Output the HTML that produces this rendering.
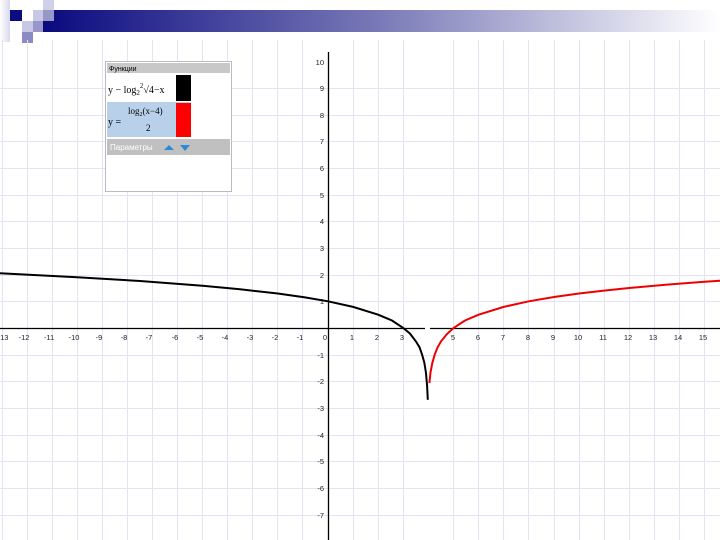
<!DOCTYPE html><html><head><meta charset="utf-8"><style>body{margin:0;width:720px;height:540px;overflow:hidden;background:#fff;font-family:"Liberation Sans","Noto Sans CJK SC",sans-serif}</style></head><body>
<svg width="720" height="540" viewBox="0 0 720 540" xmlns="http://www.w3.org/2000/svg" style="position:absolute;left:0;top:0">
<defs><linearGradient id="g" x1="0" x2="1"><stop offset="0" stop-color="#0a0a80"/><stop offset="0.5" stop-color="#7a7ab8"/><stop offset="1" stop-color="#ffffff"/></linearGradient>
<linearGradient id="g2" x1="0" x2="1"><stop offset="0" stop-color="#fff"/><stop offset="1" stop-color="#d8d8ec"/></linearGradient></defs>
<rect x="0" y="0" width="10" height="42" fill="url(#g2)"/>
<rect x="43" y="10" width="677" height="22" fill="url(#g)"/>
<rect x="10" y="10" width="12" height="11" fill="#0c0c80"/>
<rect x="43" y="0" width="11" height="10" fill="#d0d0e8"/>
<rect x="33" y="10" width="10" height="11" fill="#c8c8e4"/>
<rect x="43" y="10" width="11" height="11" fill="#9898c8"/>
<rect x="22" y="21" width="11" height="11" fill="#c8c8e4"/>
<rect x="33" y="21" width="10" height="11" fill="#9898c8"/>
<rect x="22" y="32" width="11" height="11" fill="#8a8ac4"/>
<g stroke="#e6e2f2" stroke-width="1">
<path d="M2.5 40V540M27.5 40V540M52.5 40V540M77.5 40V540M102.5 40V540M127.5 40V540M152.5 40V540M177.5 40V540M202.5 40V540M227.5 40V540M252.5 40V540M277.5 40V540M302.5 40V540M353.5 40V540M378.5 40V540M403.5 40V540M453.5 40V540M478.5 40V540M503.5 40V540M528.5 40V540M554.5 40V540M579.5 40V540M604.5 40V540M629.5 40V540M654.5 40V540M679.5 40V540M704.5 40V540"/>
<path d="M0 88.5H720M0 115.5H720M0 141.5H720M0 168.5H720M0 195.5H720M0 221.5H720M0 248.5H720M0 275.5H720M0 301.5H720M0 355.5H720M0 381.5H720M0 408.5H720M0 435.5H720M0 461.5H720M0 488.5H720M0 515.5H720"/>
</g>
<path d="M0 328.5H425M430 328.5H720" stroke="#000" stroke-width="1.3"/>
<path d="M328.5 52V540" stroke="#000" stroke-width="1.3"/>
<g font-size="7.5" fill="#222" text-anchor="middle">
<text x="3" y="340">-13</text><text x="24" y="340">-12</text><text x="49" y="340">-11</text><text x="74" y="340">-10</text><text x="99" y="340">-9</text><text x="124" y="340">-8</text><text x="149" y="340">-7</text><text x="175" y="340">-6</text><text x="200" y="340">-5</text><text x="225" y="340">-4</text><text x="250" y="340">-3</text><text x="275" y="340">-2</text><text x="300" y="340">-1</text><text x="325" y="340">0</text><text x="352" y="340">1</text><text x="377" y="340">2</text><text x="402" y="340">3</text><text x="453" y="340">5</text><text x="478" y="340">6</text><text x="503" y="340">7</text><text x="528" y="340">8</text><text x="553" y="340">9</text><text x="578" y="340">10</text><text x="603" y="340">11</text><text x="628" y="340">12</text><text x="653" y="340">13</text><text x="678" y="340">14</text><text x="703" y="340">15</text>
</g>
<g font-size="7.5" fill="#222" text-anchor="end">
<text x="324" y="65">10</text><text x="324" y="91">9</text><text x="324" y="118">8</text><text x="324" y="144">7</text><text x="324" y="171">6</text><text x="324" y="198">5</text><text x="324" y="224">4</text><text x="324" y="251">3</text><text x="324" y="278">2</text><text x="324" y="304">1</text><text x="324" y="358">-1</text><text x="324" y="384">-2</text><text x="324" y="411">-3</text><text x="324" y="438">-4</text><text x="324" y="464">-5</text><text x="324" y="491">-6</text><text x="324" y="518">-7</text>
</g>
<path fill="none" stroke="#000" stroke-width="2" d="M0 273.3L77 277.2L140 281L202.5 285.7L240 289.3L277.8 293.5L305 297.4L328 301.3L353.1 306.9L378.2 314.7L392 320.5L403.3 328L410 333.6L415.9 341.4L419.5 347.2L422.1 354.7L424.3 362.5L425.9 372.4L427.1 385.7L427.8 399.8"/>
<path fill="none" stroke="#e00" stroke-width="2" d="M429.4 383L430.5 372.4L432.3 363L434.7 354.7L437.5 347.5L441 341.4L447 334L453.5 328L465 320.5L478.6 314.7L503.7 306.9L528.8 301.3L554 297L579 293.5L604 290.6L629.2 288L667 284.6L704.5 281.8L720 280.8"/>
<rect x="105.5" y="61.5" width="126" height="130" fill="#fff" stroke="#bbb"/>
<rect x="107" y="63" width="123" height="10" fill="#c8c8c8"/>
<text x="109" y="71" font-size="7" fill="#000">Функции</text>
<rect x="107" y="102" width="84" height="35" fill="#b8d0ea"/>
<rect x="176" y="75" width="15" height="26" fill="#000"/>
<rect x="176" y="103" width="15" height="34" fill="#f00"/>
<text x="108" y="93" font-family="Liberation Serif" font-size="10">y − log<tspan font-size="7" dy="2">2</tspan><tspan font-size="7" dy="-7">2</tspan><tspan dy="5">√4−x</tspan></text>
<text x="108" y="125" font-family="Liberation Serif" font-size="10">y =</text>
<text x="128" y="114" font-family="Liberation Serif" font-size="9">log<tspan font-size="6" dy="2">2</tspan><tspan dy="-2">(x−4)</tspan></text>
<text x="146" y="131" font-family="Liberation Serif" font-size="9">2</text>
<rect x="107" y="139" width="123" height="16" fill="#c0c0c0"/>
<text x="110" y="150" font-size="8" fill="#fff">Параметры</text>
<path d="M164 150L169 145L174 150Z" fill="#2a8ad8"/><path d="M180 145L190 145L185 151Z" fill="#2a8ad8"/>
</svg>
</body></html>
